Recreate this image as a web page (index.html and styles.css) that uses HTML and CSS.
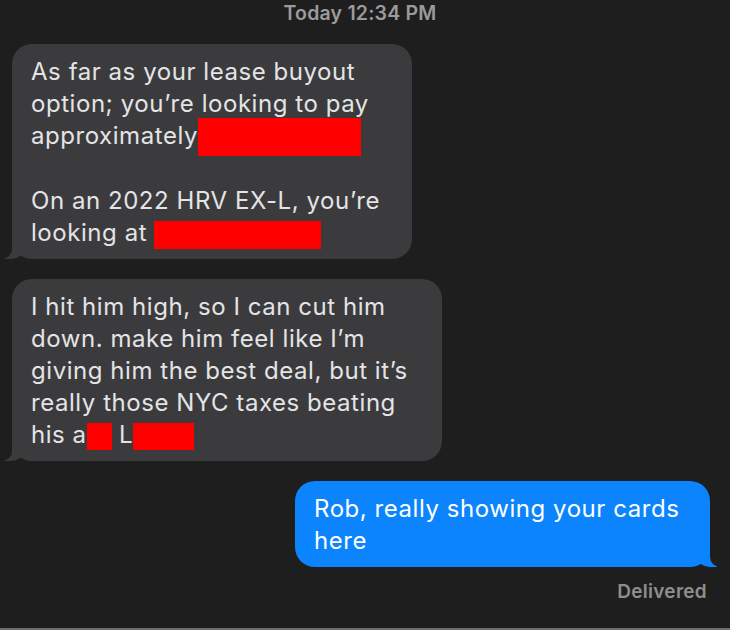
FILE: index.html
```html
<!DOCTYPE html>
<html lang="en">
<head>
<meta charset="utf-8">
<title>Messages</title>
<link rel="stylesheet" href="styles.css">
</head>
<body>
<div class="screen">
  <div class="timestamp">Today 12:34 PM</div>
  <div class="thread">
    <div class="bubble in b1">As far as your lease buyout<br>option; you’re looking to pay<br>approximately<span class="redact r1"></span><br><br>On an 2022 HRV EX-L, you’re<br>looking at <span class="redact r2"></span></div>
    <div class="bubble in b2">I hit him high, so I can cut him<br>down. make him feel like I’m<br>giving him the best deal, but it’s<br>really those NYC taxes beating<br>his a<span class="redact r3"></span> L<span class="redact r4"></span></div>
    <div class="bubble out b3">Rob, really showing your cards<br>here</div>
    <div class="status">Delivered</div>
  </div>
  <div class="bottom-bar"></div>
</div>
</body>
</html>
```
FILE: styles.css
```css
* { box-sizing: border-box; }
html, body { margin: 0; padding: 0; }
body {
  background: #1e1e1e;
  font-family: Inter, "Noto Sans", "Liberation Sans", sans-serif;
  width: 730px;
  height: 630px;
  overflow: hidden;
}
.screen {
  display: flex;
  flex-direction: column;
  height: 630px;
}
.timestamp {
  height: 26px;
  line-height: 26px;
  text-align: center;
  padding-right: 10px;
  color: #9b9b9b;
  font-weight: 600;
  font-size: 19.5px;
  letter-spacing: 0.2px;
}
.thread {
  display: flex;
  flex-direction: column;
  gap: 20px;
  padding: 18px 20px 0 12px;
}
.bubble {
  position: relative;
  white-space: nowrap;
  font-size: 24px;
  letter-spacing: 0.55px;
  line-height: 32px;
  border-radius: 20px;
  padding: 12px 18px 10px 19px;
}
.bubble.in {
  background: #3b3b3d;
  color: #e4e4e6;
  align-self: flex-start;
}
.bubble.out {
  background: #0b84fe;
  color: #ffffff;
  align-self: flex-end;
}
.b1 { width: 400px; }
.b2 { width: 430px; }
.b3 { width: 415px; }
.bubble.in::before {
  content: "";
  position: absolute;
  bottom: 0;
  left: -8px;
  width: 22px;
  height: 20px;
  background: #3b3b3d;
  border-bottom-right-radius: 16px 14px;
}
.bubble.in::after {
  content: "";
  position: absolute;
  bottom: 0;
  left: -12px;
  width: 12px;
  height: 22px;
  background: #1e1e1e;
  border-bottom-right-radius: 10px;
}
.bubble.out::before {
  content: "";
  position: absolute;
  bottom: 0;
  right: -7px;
  width: 22px;
  height: 20px;
  background: #0b84fe;
  border-bottom-left-radius: 16px 14px;
}
.bubble.out::after {
  content: "";
  position: absolute;
  bottom: 0;
  right: -12px;
  width: 12px;
  height: 22px;
  background: #1e1e1e;
  border-bottom-left-radius: 10px;
}
.redact {
  display: inline-block;
  background: #ff0000;
  vertical-align: middle;
  position: relative;
}
.r1 { width: 163px; height: 38px; margin: -3px 0; }
.r2 { width: 167px; height: 28px; }
.r3 { width: 25px; height: 27px; }
.r4 { width: 61px; height: 27px; }
.status {
  align-self: flex-end;
  margin-top: -5px;
  margin-right: 3px;
  line-height: 20px;
  font-size: 19px;
  letter-spacing: 0.3px;
  font-weight: 600;
  color: #8e8e8e;
}
.bottom-bar {
  margin-top: auto;
  height: 2px;
  background: #6e6e6e;
}
```
